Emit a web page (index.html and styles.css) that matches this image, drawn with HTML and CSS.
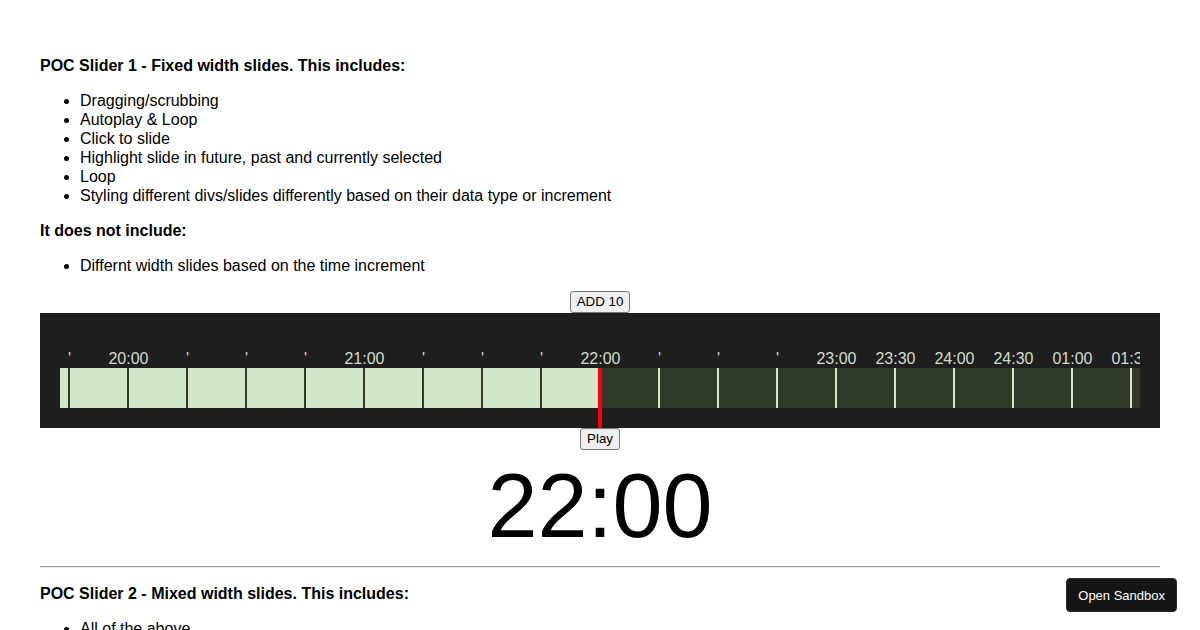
FILE: index.html
```html
<!DOCTYPE html>
<html>
<head>
<meta charset="utf-8">
<link rel="stylesheet" href="styles.css">
</head>
<body>
<div class="page">
  <h4 class="heading">POC Slider 1 - Fixed width slides. This includes:</h4>
  <ul class="list">
    <li>Dragging/scrubbing</li>
    <li>Autoplay &amp; Loop</li>
    <li>Click to slide</li>
    <li>Highlight slide in future, past and currently selected</li>
    <li>Loop</li>
    <li>Styling different divs/slides differently based on their data type or increment</li>
  </ul>
  <h4 class="heading">It does not include:</h4>
  <ul class="list">
    <li>Differnt width slides based on the time increment</li>
  </ul>

  <div class="btn-row"><button class="btn">ADD 10</button></div>
  <div class="slider">
    <div class="track">
      <div class="labels">
        <span class="label"></span>
        <span class="label">'</span>
        <span class="label">20:00</span>
        <span class="label">'</span>
        <span class="label">'</span>
        <span class="label">'</span>
        <span class="label">21:00</span>
        <span class="label">'</span>
        <span class="label">'</span>
        <span class="label">'</span>
        <span class="label">22:00</span>
        <span class="label">'</span>
        <span class="label">'</span>
        <span class="label">'</span>
        <span class="label">23:00</span>
        <span class="label">23:30</span>
        <span class="label">24:00</span>
        <span class="label">24:30</span>
        <span class="label">01:00</span>
        <span class="label">01:30</span>
      </div>
      <div class="slides">
        <div class="slide past"></div>
        <div class="slide past"></div>
        <div class="slide past"></div>
        <div class="slide past"></div>
        <div class="slide past"></div>
        <div class="slide past"></div>
        <div class="slide past"></div>
        <div class="slide past"></div>
        <div class="slide past"></div>
        <div class="slide past"></div>
        <div class="slide future"></div>
        <div class="slide future"></div>
        <div class="slide future"></div>
        <div class="slide future"></div>
        <div class="slide future"></div>
        <div class="slide future"></div>
        <div class="slide future"></div>
        <div class="slide future"></div>
        <div class="slide future"></div>
        <div class="slide future"></div>
      </div>
    </div>
    <div class="marker"></div>
  </div>
  <div class="btn-row"><button class="btn">Play</button></div>
  <div class="time">22:00</div>
  <hr class="rule">
  <h4 class="heading">POC Slider 2 - Mixed width slides. This includes:</h4>
  <ul class="list">
    <li>All of the above</li>
    <li>Mixed width slides</li>
  </ul>
</div>
<button class="sandbox">Open Sandbox</button>
</body>
</html>
```
FILE: styles.css
```css
html, body {
  margin: 0;
  padding: 0;
  background: #fff;
}
body {
  font-family: "Liberation Sans", Arial, sans-serif;
  font-size: 16px;
  color: #000;
}
.page {
  padding: 40px;
}
.heading {
  margin: 16px 0;
  font-size: 16px;
  font-weight: bold;
  line-height: 19px;
}
.list {
  margin: 16px 0;
  padding-left: 40px;
  line-height: 19px;
}
.btn-row {
  display: flex;
  justify-content: center;
}
.btn {
  font-family: "Liberation Sans", Arial, sans-serif;
  font-size: 13.333px;
  line-height: 16px;
  height: 22px;
  padding: 2px 6px;
  color: #000;
  background: #efefef;
  border: 1px solid #767676;
  border-radius: 3px;
}
.slider {
  position: relative;
  background: #1e1e1e;
  padding: 36px 20px 20px;
  height: 59px;
}
.track {
  overflow: hidden;
}
.labels {
  display: flex;
  margin-left: -79px;
  height: 19px;
  line-height: 19px;
}
.label {
  flex: 0 0 59px;
  text-align: center;
  color: #d3dccc;
  font-size: 16px;
  white-space: nowrap;
}
.slides {
  display: flex;
  margin-left: -51px;
  height: 40px;
}
.slide {
  flex: 0 0 59px;
  box-sizing: border-box;
  height: 40px;
  border-left: 2px solid;
}
.past {
  background: #d2e7c6;
  border-left-color: #313a29;
}
.future {
  background: #313a29;
  border-left-color: #d2e7c6;
}
.marker {
  position: absolute;
  left: 558px;
  top: 55px;
  bottom: 0;
  width: 4px;
  background: #ff0000;
}
.time {
  text-align: center;
  font-size: 90px;
  line-height: normal;
  margin-top: 5px;
}
.rule {
  margin: 8px 0;
  border: 0;
  border-top: 1px solid #9a9a9a;
  border-bottom: 1px solid #eeeeee;
}
.sandbox {
  position: fixed;
  right: 23px;
  bottom: 18px;
  height: 34px;
  padding: 0 11px;
  white-space: nowrap;
  font-family: "Liberation Sans", Arial, sans-serif;
  font-size: 13px;
  color: #fff;
  background: #151515;
  border: 1px solid #2a2a2a;
  border-radius: 4px;
}
```
